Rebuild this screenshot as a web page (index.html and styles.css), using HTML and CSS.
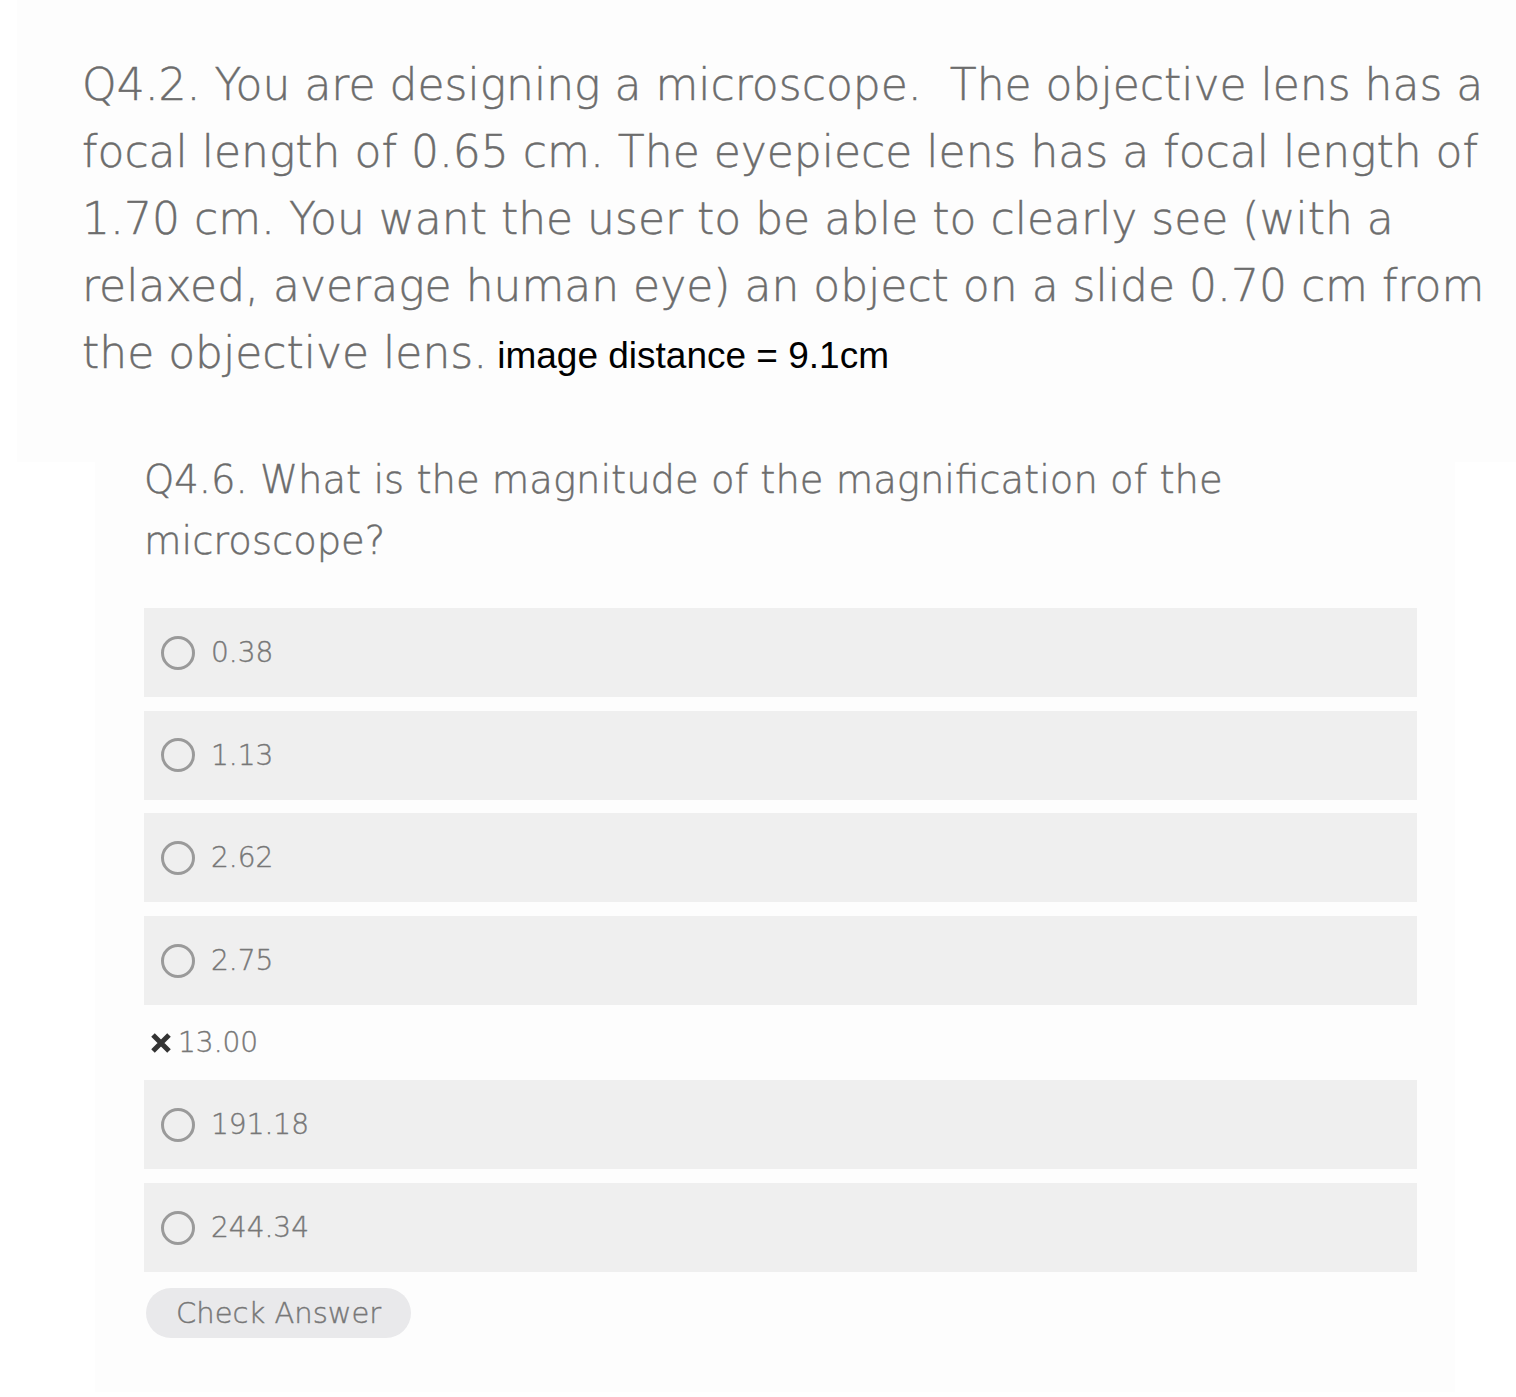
FILE: index.html
```html
<!DOCTYPE html>
<html>
<head>
<meta charset="utf-8">
<link rel="stylesheet" href="styles.css">
</head>
<body>
<main class="page">
  <section class="intro-card">
    <p class="intro">Q4.2. You are designing a microscope.&nbsp; The objective lens has a<br>focal length of 0.65 cm. The eyepiece lens has a focal length of<br>1.70 cm. You want the user to be able to clearly see (with a<br>relaxed, average human eye) an object on a slide 0.70 cm from<br>the objective lens. <span class="note">image distance = 9.1cm</span></p>
  </section>

  <section class="question">
    <h2 class="prompt">Q4.6. What is the magnitude of the magnification of the<br>microscope?</h2>
    <ul class="options">
      <li class="option"><span class="radio"></span><span class="label">0.38</span></li>
      <li class="option"><span class="radio"></span><span class="label">1.13</span></li>
      <li class="option"><span class="radio"></span><span class="label">2.62</span></li>
      <li class="option"><span class="radio"></span><span class="label">2.75</span></li>
      <li class="option wrong"><svg class="cross" viewBox="0 0 24 24" width="24" height="24"><path d="M4 4 L20 20 M20 4 L4 20" stroke="#333" stroke-width="5" stroke-linecap="butt"/></svg><span class="label">13.00</span></li>
      <li class="option"><span class="radio"></span><span class="label">191.18</span></li>
      <li class="option"><span class="radio"></span><span class="label">244.34</span></li>
    </ul>
    <button class="check">Check Answer</button>
  </section>
</main>
</body>
</html>
```
FILE: styles.css
```css
html, body {
  margin: 0;
  padding: 0;
  background: #ffffff;
}
.page {
  font-family: "DejaVu Sans", "Open Sans", sans-serif;
  font-weight: 200;
  color: #6c6c6c;
  -webkit-text-stroke: 0.45px #6c6c6c;
}
.intro-card {
  margin-left: 17px;
  padding: 51px 0 73px 65px;
  background: #fdfdfd;
}
.intro {
  margin: 0;
  font-size: 44px;
  line-height: 67px;
  white-space: nowrap;
}
.note {
  font-family: "Liberation Sans", Arial, sans-serif;
  font-weight: 400;
  font-size: 37px;
  color: #000;
  -webkit-text-stroke: 0;
  margin-left: -4px;
}
.question {
  margin-left: 95px;
  width: 1360px;
  padding: 0 0 54px 49px;
  box-sizing: border-box;
  background: #fdfdfd;
}
.prompt {
  margin: 0;
  position: relative;
  top: -13px;
  font-size: 38.5px;
  font-weight: 200;
  line-height: 61px;
  white-space: nowrap;
}
.options {
  list-style: none;
  margin: 24px 0 0;
  padding: 0;
  width: 1273px;
  display: flex;
  flex-direction: column;
  gap: 13.7px;
}
.option {
  height: 89px;
  background: #efefef;
  display: flex;
  align-items: center;
  padding-left: 17px;
  gap: 16px;
  font-size: 28px;
  color: #777;
  -webkit-text-stroke: 0.4px #777;
}
.radio {
  width: 28px;
  height: 28px;
  border: 3px solid #9a9a9a;
  border-radius: 50%;
  flex: none;
}
.option.wrong {
  height: 48px;
  background: transparent;
  padding-left: 5px;
  gap: 5px;
}
.cross {
  flex: none;
}
.check {
  display: block;
  margin: 16px 0 0 2px;
  height: 50px;
  padding: 0 30px;
  border: none;
  border-radius: 25px;
  background: #e9e9eb;
  font-family: "DejaVu Sans", sans-serif;
  font-weight: 200;
  font-size: 29px;
  color: #777;
  -webkit-text-stroke: 0.4px #777;
}
```
